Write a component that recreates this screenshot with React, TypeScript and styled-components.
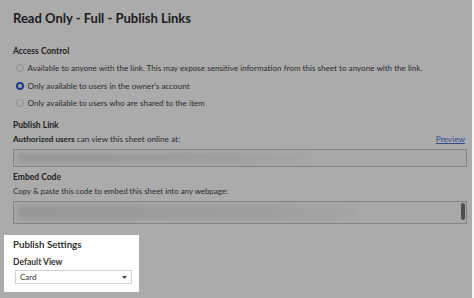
import styled, { createGlobalStyle } from 'styled-components';

const GlobalStyle = createGlobalStyle`
  html, body {
    margin: 0;
    padding: 0;
    background: #ffffff;
  }
  body {
    font-family: Lato, 'Noto Sans', 'Liberation Sans', sans-serif;
    color: #333333;
  }
`;

const Page = styled.div`
  position: relative;
  width: 474px;
  height: 298px;
  box-sizing: border-box;
  padding: 8px 7px 0 13px;
  overflow: hidden;
  background: #ffffff;
  border-right: 2px solid #f4f4f4;
`;

const Dim = styled.div`
  position: absolute;
  inset: 0;
  background: rgba(0, 0, 0, 0.33);
  z-index: 1;
`;

const Title = styled.h1`
  margin: 0;
  font-size: 13px;
  line-height: 20px;
  font-weight: 700;
  color: #2e2e2e;
`;

const Label = styled.div<{ $top: number; $size?: number }>`
  margin-top: ${(p) => p.$top}px;
  font-size: ${(p) => p.$size ?? 8.5}px;
  line-height: 12px;
  font-weight: 700;
  color: #333333;
`;

const Text = styled.div<{ $top: number }>`
  margin-top: ${(p) => p.$top}px;
  font-size: 7.9px;
  line-height: 12px;
  color: #444444;
`;

const RadioList = styled.div`
  margin-top: 2.5px;
  display: flex;
  flex-direction: column;
`;

const RadioRow = styled.label`
  height: 17.5px;
  display: flex;
  align-items: center;
  gap: 4px;
  padding-left: 2.5px;
  font-size: 8.1px;
  color: #444444;
`;

const Radio = styled.span<{ $checked?: boolean }>`
  width: 8px;
  height: 8px;
  box-sizing: border-box;
  border-radius: 50%;
  background: #ffffff;
  border: ${(p) => (p.$checked ? '2.5px solid #2b5bd1' : '1px solid #d6d6d6')};
  flex-shrink: 0;
`;

const LinkRow = styled.div`
  margin-top: 2px;
  display: flex;
  justify-content: space-between;
  align-items: center;
  line-height: 12px;
  font-size: 8.2px;
  color: #444444;

  b {
    color: #333333;
  }
`;

const Preview = styled.a`
  color: #4d72d8;
  text-decoration: underline;
  font-size: 8.3px;
  cursor: pointer;
`;

const Field = styled.div<{ $top: number; $height: number }>`
  margin-top: ${(p) => p.$top}px;
  height: ${(p) => p.$height}px;
  width: 454px;
  box-sizing: border-box;
  border: 1px solid #c4c4c4;
  background: #fbfbfb;
  display: flex;
  align-items: stretch;
  overflow: hidden;
`;

const Blurred = styled.div<{ $width: number }>`
  width: ${(p) => p.$width}px;
  margin: 3px 0 3px 4px;
  background: linear-gradient(90deg, #e2e2e2, #ebebeb 70%, #f6f6f6);
  filter: blur(2px);
`;

const Spacer = styled.div`
  flex: 1;
`;

const Scrollbar = styled.div`
  width: 4px;
  margin: 1px 1px 3px 0;
  border-radius: 2px;
  background: #767676;
`;

const Spotlight = styled.section`
  position: relative;
  z-index: 2;
  margin: 11px 0 0 -9px;
  width: 135px;
  box-sizing: border-box;
  padding: 3px 9px 8px;
  background: #ffffff;
`;

const Select = styled.div`
  margin: 2px 0 0 2px;
  width: 117px;
  height: 14px;
  box-sizing: border-box;
  border: 1px solid #d2d2d2;
  padding: 0 4px;
  display: flex;
  align-items: center;
  justify-content: space-between;
  font-size: 8px;
  color: #333333;
`;

const Caret = () => (
  <svg width="5" height="3" viewBox="0 0 5 3">
    <path d="M0 0 L5 0 L2.5 3 Z" fill="#444444" />
  </svg>
);

const options = [
  {
    label:
      'Available to anyone with the link. This may expose sensitive information from this sheet to anyone with the link.',
    checked: false,
  },
  { label: "Only available to users in the owner's account", checked: true },
  { label: 'Only available to users who are shared to the item', checked: false },
];

export default function App() {
  return (
    <>
      <GlobalStyle />
      <Page>
        <Title>Read Only - Full - Publish Links</Title>

        <Label $top={17}>Access Control</Label>
        <RadioList>
          {options.map((o) => (
            <RadioRow key={o.label}>
              <Radio $checked={o.checked} />
              {o.label}
            </RadioRow>
          ))}
        </RadioList>

        <Label $top={7}>Publish Link</Label>
        <LinkRow>
          <span>
            <b>Authorized users</b> can view this sheet online at:
          </span>
          <Preview>Preview</Preview>
        </LinkRow>
        <Field $top={4} $height={18}>
          <Blurred $width={290} />
          <Spacer />
        </Field>

        <Label $top={4}>Embed Code</Label>
        <Text $top={2}>Copy &amp; paste this code to embed this sheet into any webpage:</Text>
        <Field $top={4} $height={23}>
          <Blurred $width={340} />
          <Spacer />
          <Scrollbar />
        </Field>

        <Spotlight>
          <Label $top={0} $size={9.7}>Publish Settings</Label>
          <Label $top={6}>Default View</Label>
          <Select>
            Card
            <Caret />
          </Select>
        </Spotlight>

        <Dim />
      </Page>
    </>
  );
}
